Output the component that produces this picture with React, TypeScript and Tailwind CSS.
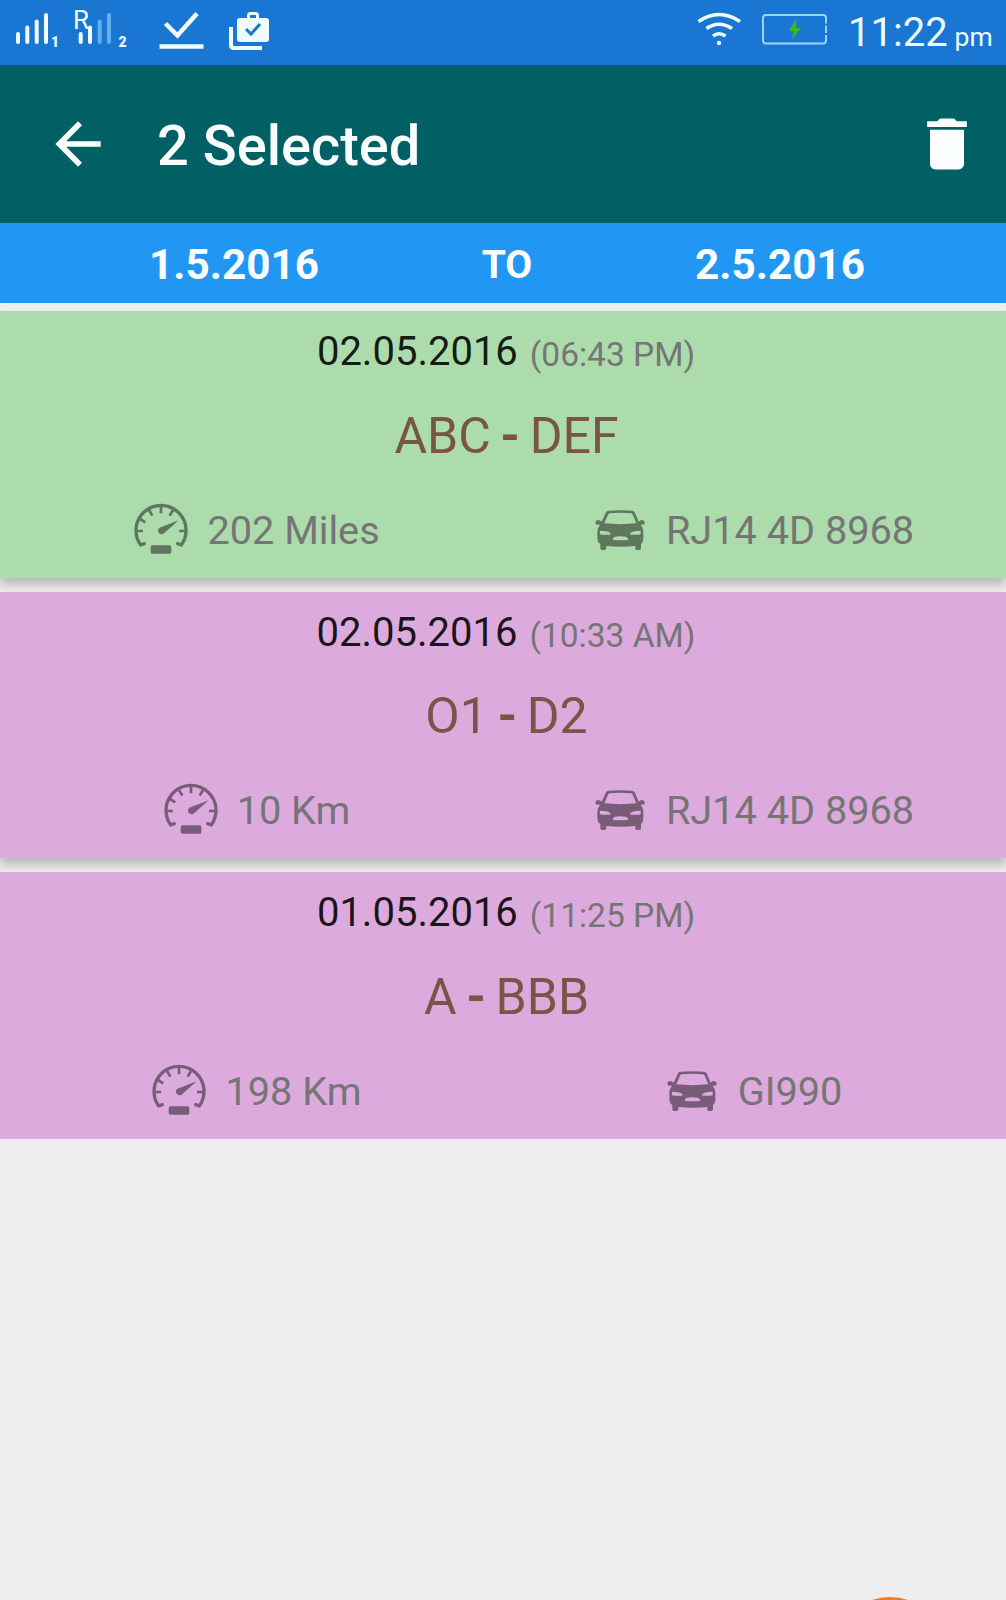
import React from "react"
import { MdArrowBack, MdDelete } from "react-icons/md"

const trips = [
  { date: "02.05.2016", time: "(06:43 PM)", from: "ABC", to: "DEF", distance: "202 Miles", vehicle: "RJ14 4D 8968", selected: false },
  { date: "02.05.2016", time: "(10:33 AM)", from: "O1", to: "D2", distance: "10 Km", vehicle: "RJ14 4D 8968", selected: true },
  { date: "01.05.2016", time: "(11:25 PM)", from: "A", to: "BBB", distance: "198 Km", vehicle: "GI990", selected: true },
]

const GaugeIcon = () => (
  <svg viewBox="40 36 168 156" className="w-14 h-[52px] mb-1 opacity-45" fill="none" stroke="#000">
    <path
      strokeWidth="10"
      strokeLinejoin="round"
      strokeLinecap="round"
      d="M74 158L63 162A75 75 0 1 1 185 162L174 158"
    />
    <path
      strokeWidth="8"
      d="M52 120H70M178 120H196M124 48V67M88 57L98 74M160 57L150 74M61 84L77 94"
    />
    <path stroke="none" fill="#000" d="M177 88L119 110A11 11 0 1 0 134 126Z" />
    <rect x="93" y="163" width="62" height="25" rx="5" stroke="none" fill="#000" />
  </svg>
)

const CarIcon = () => (
  <svg viewBox="40 56 154 126" className="w-[52px] h-[42px] mb-0.5 opacity-45">
    <path
      fill="#000"
      fillRule="evenodd"
      d="M75 66Q77 62 83 61Q118 58 153 61Q159 62 161 66L173 94Q176 89 183 89Q192 90 191 97Q191 103 185 103H178Q187 111 187 125V145Q187 155 180 162V174Q180 179 175 179H167Q163 179 163 174V167Q118 171 76 167V174Q76 179 72 179H63Q58 179 58 174V162Q49 155 49 145V125Q49 111 58 103H50Q43 103 43 97Q43 90 51 89Q59 89 62 94ZM86 69Q82 70 81 73L70 99Q118 104 166 99L155 73Q154 70 150 69Q118 66 86 69ZM58 121Q55 127 58 132Q59 133 64 133H86Q91 132 87 127Q80 121 58 121ZM178 121Q156 121 149 127Q145 132 150 133H172Q177 133 178 132Q181 127 178 121ZM95 149Q96 141 101 139Q118 137 135 139Q141 142 142 149Q118 151 95 149Z"
    />
  </svg>
)

const StatusBar = () => (
  <div className="h-[65px] bg-[#1976d2] flex items-start justify-between text-[#f0fdff]">
    <svg viewBox="0 0 300 65" className="w-[300px] h-[65px]" fill="none" stroke="currentColor">
      <path strokeWidth="4" strokeLinecap="round" d="M18 34V42M27.300 27.500V42M36.700 21.500V42M46 15V42" />
      <text x="51" y="47" fontSize="14" fontWeight="900" fontFamily="Roboto, sans-serif" fill="currentColor" stroke="none">1</text>
      <text x="73" y="28.500" fontSize="26" fontWeight="400" fontFamily="Roboto, sans-serif" fill="currentColor" stroke="none">R</text>
      <path strokeWidth="4" strokeLinecap="round" d="M80.700 34V42M90 27.500V42" />
      <path strokeWidth="4" strokeLinecap="round" stroke="#66aef2" d="M99.700 21.500V42M109 15V42" />
      <text x="118.500" y="47" fontSize="14" fontWeight="900" fontFamily="Roboto, sans-serif" fill="currentColor" stroke="none">2</text>
      <path strokeWidth="4.500" d="M165.500 23.500L177.500 35.500L197 13.500M159.500 46.500H203.500" />
      <path strokeWidth="4" d="M231 27V45Q231 48 234 48H262" />
      <path strokeWidth="3" d="M248.500 19V15.500Q248.500 13.500 250.500 13.500H255.500Q257.500 13.500 257.500 15.500V19" />
      <rect x="237" y="18" width="32" height="24" rx="3" fill="currentColor" stroke="none" />
      <path stroke="#1976d2" strokeWidth="3" d="M246 29L251 34L260 24" />
    </svg>
    <div className="flex items-start">
      <svg viewBox="690 0 150 65" className="w-[150px] h-[65px]" fill="none" stroke="currentColor">
        <path strokeWidth="3.600" d="M698.500 21.500Q719 7.500 740 21.500M706.500 28.500Q719 20 732 28.500M713 36Q719 31.500 725.500 36" />
        <circle cx="719" cy="43" r="2.200" fill="currentColor" stroke="none" />
        <rect x="763" y="15" width="63" height="28.500" rx="3" strokeWidth="1.900" stroke="#9fd6fb" />
        <path stroke="#1976d2" strokeWidth="3" d="M826 23.500V25.500M826 33V35" />
        <path stroke="none" fill="#3dbb1c" d="M796.500 18.500L789 31H794L792 39.500L801 28H796Z" />
      </svg>
      <div className="w-[166px] h-[65px] pl-[8px] whitespace-nowrap leading-[65px]">
        <span className="text-[40px]">11:22</span>
        <span className="text-[26.5px] ml-[7px]">pm</span>
      </div>
    </div>
  </div>
)

export default function App() {
  return (
    <div className="w-[1006px] h-[1600px] overflow-hidden bg-[#eeeeee] flex flex-col font-[Roboto,sans-serif]">
      <StatusBar />
      <header className="h-[158px] bg-[#006064] text-[#fafeff] flex items-center pl-[44px] pr-[25px]">
        <MdArrowBack className="size-[68px]" />
        <h1 className="ml-[45px] pt-[3px] text-[56px] font-medium leading-none">2 Selected</h1>
        <MdDelete className="size-[68px] ml-auto" />
      </header>
      <div className="h-20 pt-1 bg-[#2196f3] text-[#fafeff] flex items-center text-[42.3px] font-bold">
        <span className="w-[468px] shrink-0 text-center">1.5.2016</span>
        <span className="w-[78px] shrink-0 text-center text-[39px]">TO</span>
        <span className="w-[468px] shrink-0 text-center">2.5.2016</span>
      </div>
      <main className="pt-2 flex flex-col gap-3.5">
        {trips.map((trip, i) => (
          <section
            key={i}
            className={`h-[266.5px] ${trip.selected ? "bg-[#dcaadc]" : "bg-[#acdbac]"} ${
              i < trips.length - 1 ? "shadow-[0_7px_9px_rgba(0,0,0,0.22)]" : ""
            }`}
          >
            <div className="h-[82px] pl-1.5 flex items-center justify-center gap-3">
              <span className="text-[40px] text-black/90">{trip.date}</span>
              <span className="text-[33.5px] pt-[7px] text-[#757575]">{trip.time}</span>
            </div>
            <div className="h-[86px] pl-[7px] flex items-center justify-center text-[50px] text-[#795548]">
              <span>{trip.from}</span>
              <span className="w-[39px] text-center font-bold">-</span>
              <span>{trip.to}</span>
            </div>
            <div className="h-[98px] pt-[5px] grid grid-cols-2 text-[39.7px] text-[#757575]">
              <div className="flex items-center justify-center gap-[18px] pl-[10px]">
                <GaugeIcon />
                <span>{trip.distance}</span>
              </div>
              <div className="flex items-center justify-center gap-5 pr-px">
                <CarIcon />
                <span>{trip.vehicle}</span>
              </div>
            </div>
          </section>
        ))}
      </main>
      <button className="mt-auto -mb-[109px] ml-auto mr-[60px] size-28 shrink-0 rounded-full bg-[#ef7c21]" />
    </div>
  )
}
